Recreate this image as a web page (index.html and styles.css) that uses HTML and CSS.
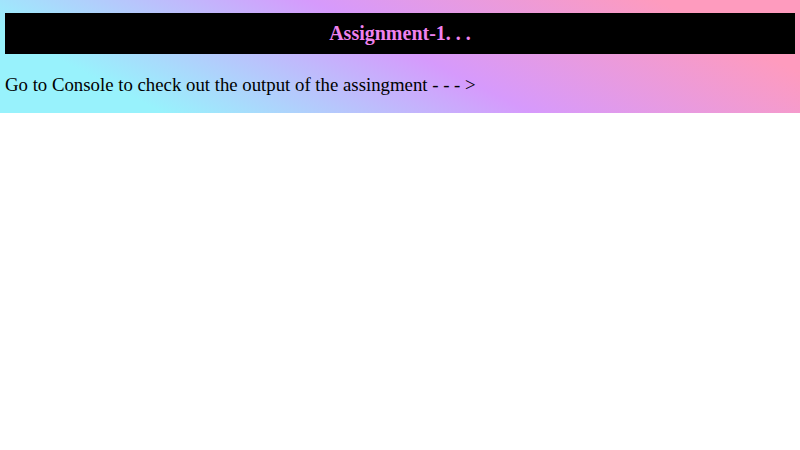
FILE: index.html
```html
<!DOCTYPE html>
<html>
<head>
<meta charset="utf-8">
<link rel="stylesheet" href="styles.css">
</head>
<body>
<div class="page">
  <h1 class="title">Assignment-1. . .</h1>
  <p class="note">Go to Console to check out the output of the assingment - - - &gt;</p>
</div>
</body>
</html>
```
FILE: styles.css
```css
html, body {
  margin: 0;
  padding: 0;
  background: #fff;
}
.page {
  padding: 13px 5px 1px;
  height: 99px;
  background: linear-gradient(27deg, #98f2fc 0%, #98f2fc 16%, #d69afc 52%, #fe9bbe 86%, #fe9bbe 100%);
  font-family: "Liberation Serif", "Times New Roman", serif;
}
.title {
  margin: 0;
  height: 41px;
  line-height: 41px;
  background: #000;
  color: violet;
  text-align: center;
  font-size: 20px;
  font-weight: bold;
}
.note {
  margin: 19px 0 0;
  font-size: 18.8px;
  line-height: 23px;
  color: #000;
}
```
